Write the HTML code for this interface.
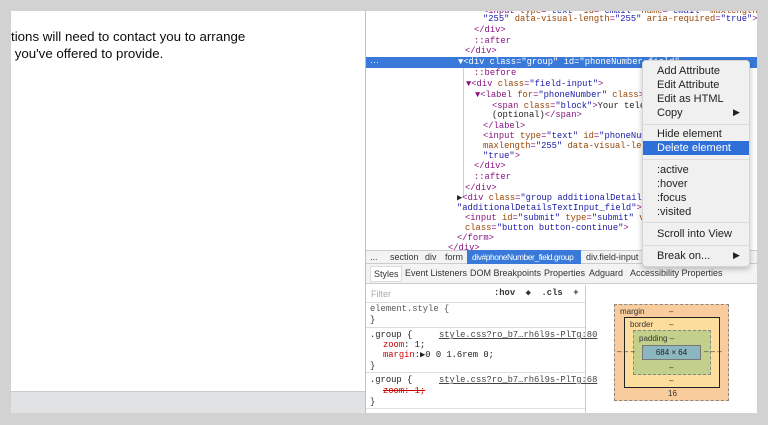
<!DOCTYPE html>
<html><head><meta charset="utf-8"><style>
*{margin:0;padding:0;box-sizing:border-box}
body{width:768px;height:425px;background:#d2d2d2;position:relative;overflow:hidden;font-family:"Liberation Sans",sans-serif}
.abs{position:absolute}
#page{left:11px;top:11px;width:354px;height:402px;background:#fff}
#pagebar{left:11px;top:391px;width:354px;height:22px;background:#e1e2e4;border-top:1px solid #c8c9cc}
.ptxt{left:11px;font-size:13.3px;color:#0b0c0c;white-space:nowrap}
#dt{left:365px;top:11px;width:392px;height:402px;background:#fff;border-left:1px solid #c0c0c0;overflow:hidden}
.m{font-family:"Liberation Mono",monospace;font-size:8.8px;white-space:pre;position:absolute;line-height:11px;color:#881280}
.t{color:#881280}.a{color:#994500}.v{color:#1a1aa6}.p{color:#c80000}.k{color:#222}
#sel{left:0;top:46px;width:392px;height:11px;background:#3879d9}
#menu{left:642px;top:60px;width:108px;height:207px;background:#f0f0f0;border:1px solid #d6d6d6;border-radius:4px;box-shadow:0 2px 6px rgba(0,0,0,.25);font-size:11px;color:#222}
.mi{position:absolute;left:14px;white-space:nowrap}
.sep{position:absolute;left:0;width:106px;height:1px;background:#dcdcdc}
.s{font-size:9px;color:#333;position:absolute;white-space:nowrap}
</style></head><body>
<div id="page" class="abs"></div>
<div id="pagebar" class="abs"></div>
<div class="abs ptxt" style="top:29px">tions will need to contact you to arrange</div>
<div class="abs ptxt" style="top:46px">&nbsp;you've offered to provide.</div>

<div id="dt" class="abs">
 <div class="abs" id="sel"></div>
 <div class="abs" style="left:0;top:47px;color:#fff;font-size:9px;line-height:8px;left:4px">···</div>
 <div class="m" style="left:117px;top:-5px"><span class="t">&lt;input</span> <span class="a">type</span>=<span class="v">"text"</span> <span class="a">id</span>=<span class="v">"email"</span> <span class="a">name</span>=<span class="v">"email"</span> <span class="a">maxlength</span>=</div>
 <div class="m" style="left:117px;top:3px"><span class="v">"255"</span> <span class="a">data-visual-length</span>=<span class="v">"255"</span> <span class="a">aria-required</span>=<span class="v">"true"</span>&gt;</div>
 <div class="m" style="left:108px;top:14px">&lt;/div&gt;</div>
 <div class="m" style="left:108px;top:25px">::after</div>
 <div class="m" style="left:99px;top:35px">&lt;/div&gt;</div>
 <div class="m" style="left:92px;top:46px;color:#fff">▼&lt;div class="group" id="phoneNumber_field"</div>
 <div class="abs" style="left:97px;top:57px;width:1px;height:130px;background:#bcd0f0"></div>
 <div class="m" style="left:108px;top:57px">::before</div>
 <div class="m" style="left:100px;top:68px">▼&lt;div <span class="a">class</span>=<span class="v">"field-input"</span>&gt;</div>
 <div class="m" style="left:109px;top:79px">▼&lt;label <span class="a">for</span>=<span class="v">"phoneNumber"</span> <span class="a">class</span>&gt;</div>
 <div class="m" style="left:126px;top:90px">&lt;span <span class="a">class</span>=<span class="v">"block"</span>&gt;<span class="k">Your telepho</span></div>
 <div class="m" style="left:126px;top:99px"><span class="k">(optional)</span>&lt;/span&gt;</div>
 <div class="m" style="left:117px;top:110px">&lt;/label&gt;</div>
 <div class="m" style="left:117px;top:120px">&lt;input <span class="a">type</span>=<span class="v">"text"</span> <span class="a">id</span>=<span class="v">"phoneNumbe</span></div>
 <div class="m" style="left:117px;top:130px"><span class="a">maxlength</span>=<span class="v">"255"</span> <span class="a">data-visual-lengt</span></div>
 <div class="m" style="left:117px;top:140px"><span class="v">"true"</span>&gt;</div>
 <div class="m" style="left:108px;top:150px">&lt;/div&gt;</div>
 <div class="m" style="left:108px;top:161px">::after</div>
 <div class="m" style="left:99px;top:172px">&lt;/div&gt;</div>
 <div class="m" style="left:91px;top:182px"><span class="k">▶</span>&lt;div <span class="a">class</span>=<span class="v">"group additionalDetailsTe</span></div>
 <div class="m" style="left:91px;top:192px"><span class="v">"additionalDetailsTextInput_field"</span>&gt;<span class="k">…</span>&lt;/d</div>
 <div class="m" style="left:99px;top:202px">&lt;input <span class="a">id</span>=<span class="v">"submit"</span> <span class="a">type</span>=<span class="v">"submit"</span> <span class="a">valu</span></div>
 <div class="m" style="left:99px;top:212px"><span class="a">class</span>=<span class="v">"button button-continue"</span>&gt;</div>
 <div class="m" style="left:91px;top:222px">&lt;/form&gt;</div>
 <div class="m" style="left:82px;top:232px">&lt;/div&gt;</div>
 <!-- breadcrumb -->
 <div class="abs" style="left:0;top:239px;width:392px;height:14px;background:#f3f3f3;border-top:1px solid #ccc;border-bottom:1px solid #ccc;font-size:9px;color:#333">
  <span class="abs" style="left:4px;top:1px">...</span>
  <span class="abs" style="left:24px;top:1px">section</span>
  <span class="abs" style="left:59px;top:1px">div</span>
  <span class="abs" style="left:79px;top:1px">form</span>
  <span class="abs" style="left:101px;top:-1px;width:114px;height:14px;background:#3879d9;color:#fff;padding:2px 0 0 5px;font-size:8.4px;letter-spacing:-.4px;white-space:nowrap;overflow:hidden">div#phoneNumber_field.group</span>
  <span class="abs" style="left:220px;top:1px">div.field-input</span>
 </div>
 <!-- tabs -->
 <div class="abs" style="left:0;top:253px;width:392px;height:20px;background:#f3f3f3;border-bottom:1px solid #ccc;font-size:9px;color:#333">
  <span class="abs" style="left:4px;top:2px;width:32px;height:16px;background:#fff;border:1px solid #ddd;padding:2px 0 0 3px">Styles</span>
  <span class="abs" style="left:39px;top:4px">Event Listeners</span>
  <span class="abs" style="left:104px;top:4px">DOM Breakpoints</span>
  <span class="abs" style="left:178px;top:4px">Properties</span>
  <span class="abs" style="left:223px;top:4px">Adguard</span>
  <span class="abs" style="left:264px;top:4px">Accessibility Properties</span>
 </div>
 <div class="abs" style="left:219px;top:274px;width:1px;height:130px;background:#ccc"></div>
 <!-- styles -->
 <div class="s" style="left:5px;top:278px;color:#aaa">Filter</div>
 <div class="m" style="left:128px;top:277px;color:#333;font-weight:bold">:hov  ◆  .cls  +</div>
 <div class="abs" style="left:0;top:291px;width:219px;height:1px;background:#ddd"></div>
 <div class="m" style="left:4px;top:293px;color:#555">element.style {</div>
 <div class="m" style="left:4px;top:304px;color:#333">}</div>
 <div class="abs" style="left:0;top:316px;width:219px;height:1px;background:#ddd"></div>
 <div class="m" style="left:4px;top:319px;color:#222">.group {</div>
 <div class="m" style="left:73px;top:319px;color:#444;text-decoration:underline">style.css?ro_b7…rh6l9s-PlTg:80</div>
 <div class="m" style="left:17px;top:329px"><span class="p">zoom</span><span class="k">: 1;</span></div>
 <div class="m" style="left:17px;top:339px"><span class="p">margin</span><span class="k">:▶0 0 1.6rem 0;</span></div>
 <div class="m" style="left:4px;top:350px;color:#333">}</div>
 <div class="abs" style="left:0;top:361px;width:219px;height:1px;background:#ddd"></div>
 <div class="m" style="left:4px;top:364px;color:#222">.group {</div>
 <div class="m" style="left:73px;top:364px;color:#444;text-decoration:underline">style.css?ro_b7…rh6l9s-PlTg:68</div>
 <div class="m" style="left:17px;top:375px;text-decoration:line-through;color:#c80000">zoom: 1;</div>
 <div class="m" style="left:4px;top:386px;color:#333">}</div>
 <div class="abs" style="left:0;top:397px;width:219px;height:1px;background:#ddd"></div>
 <!-- box model -->
 <div class="abs" style="left:248px;top:293px;width:115px;height:97px;background:#f9cc9d;border:1px dashed #888"></div>
 <div class="s" style="left:254px;top:296px;font-size:8px">margin</div>
 <div class="s" style="left:303px;top:296px;font-size:8px">–</div>
 <div class="abs" style="left:258px;top:306px;width:96px;height:71px;background:#fddd9b;border:1px solid #222"></div>
 <div class="s" style="left:264px;top:309px;font-size:8px">border</div>
 <div class="s" style="left:303px;top:309px;font-size:8px">–</div>
 <div class="abs" style="left:267px;top:319px;width:78px;height:45px;background:#c3d08b;border:1px dashed #888"></div>
 <div class="s" style="left:273px;top:323px;font-size:8px">padding –</div>
 <div class="abs" style="left:276px;top:334px;width:59px;height:15px;background:#8cb6c0;border:1px solid #777;font-size:8px;text-align:center;line-height:13px;color:#222">684 × 64</div>
 <div class="s" style="left:251px;top:336px;font-size:8px">– – –</div>
 <div class="s" style="left:338px;top:336px;font-size:8px">– – –</div>
 <div class="s" style="left:303px;top:352px;font-size:8px">–</div>
 <div class="s" style="left:303px;top:365px;font-size:8px">–</div>
 <div class="s" style="left:302px;top:378px;font-size:8px">16</div>
</div>

<div id="menu" class="abs">
 <div class="mi" style="top:4px">Add Attribute</div>
 <div class="mi" style="top:18px">Edit Attribute</div>
 <div class="mi" style="top:32px">Edit as HTML</div>
 <div class="mi" style="top:46px">Copy</div><div class="mi" style="top:46px;left:90px;font-size:9px">▶</div>
 <div class="sep" style="top:63px"></div>
 <div class="mi" style="top:67px">Hide element</div>
 <div class="abs" style="left:0;top:80px;width:106px;height:14px;background:#2f6fd8"></div>
 <div class="mi" style="top:81px;color:#fff">Delete element</div>
 <div class="sep" style="top:98px"></div>
 <div class="mi" style="top:103px">:active</div>
 <div class="mi" style="top:117px">:hover</div>
 <div class="mi" style="top:131px">:focus</div>
 <div class="mi" style="top:145px">:visited</div>
 <div class="sep" style="top:161px"></div>
 <div class="mi" style="top:167px">Scroll into View</div>
 <div class="sep" style="top:184px"></div>
 <div class="mi" style="top:189px">Break on...</div><div class="mi" style="top:189px;left:90px;font-size:9px">▶</div>
</div>
</body></html>
